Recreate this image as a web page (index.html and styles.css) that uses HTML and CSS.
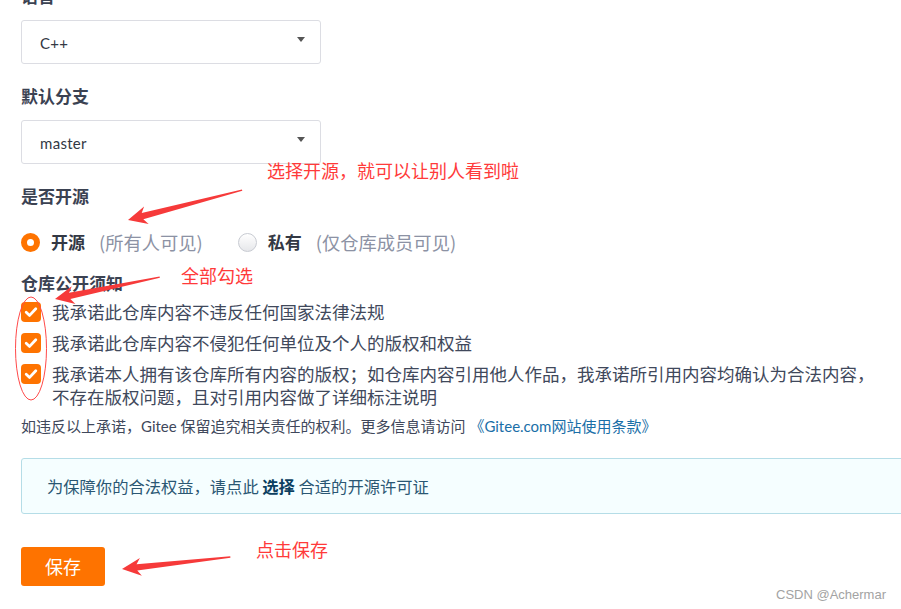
FILE: index.html
```html
<!DOCTYPE html>
<html lang="zh-CN">
<head>
<meta charset="utf-8">
<title>仓库设置</title>
<link rel="stylesheet" href="styles.css">
</head>
<body>
<div class="page">
  <form class="form">
    <div class="field">
      <div class="label">语言</div>
      <div class="select"><span class="select-text">C++</span><i class="caret"></i></div>
    </div>
    <div class="field">
      <div class="label">默认分支</div>
      <div class="select"><span class="select-text">master</span><i class="caret"></i></div>
    </div>
    <div class="field field-radio">
      <div class="label">是否开源</div>
      <div class="radios">
        <label class="radio-item"><i class="radio checked"></i><b class="radio-name">开源</b><span class="radio-hint">(所有人可见)</span></label>
        <label class="radio-item"><i class="radio"></i><b class="radio-name">私有</b><span class="radio-hint">(仅仓库成员可见)</span></label>
      </div>
    </div>
    <div class="field field-check">
      <div class="label">仓库公开须知</div>
      <div class="checks">
        <div class="check-row"><i class="checkbox"><svg viewBox="0 0 20 20" width="20" height="20"><path d="M5.2 10.2 L8.6 13.4 L14.8 6.8" fill="none" stroke="#fff" stroke-width="2.8" stroke-linecap="round" stroke-linejoin="round"/></svg></i><span class="check-text">我承诺此仓库内容不违反任何国家法律法规</span></div>
        <div class="check-row"><i class="checkbox"><svg viewBox="0 0 20 20" width="20" height="20"><path d="M5.2 10.2 L8.6 13.4 L14.8 6.8" fill="none" stroke="#fff" stroke-width="2.8" stroke-linecap="round" stroke-linejoin="round"/></svg></i><span class="check-text">我承诺此仓库内容不侵犯任何单位及个人的版权和权益</span></div>
        <div class="check-row"><i class="checkbox"><svg viewBox="0 0 20 20" width="20" height="20"><path d="M5.2 10.2 L8.6 13.4 L14.8 6.8" fill="none" stroke="#fff" stroke-width="2.8" stroke-linecap="round" stroke-linejoin="round"/></svg></i><span class="check-text">我承诺本人拥有该仓库所有内容的版权；如仓库内容引用他人作品，我承诺所引用内容均确认为合法内容，<br>不存在版权问题，且对引用内容做了详细标注说明</span></div>
      </div>
      <div class="notice">如违反以上承诺，Gitee 保留追究相关责任的权利。更多信息请访问 <a class="link" href="#">《Gitee.com网站使用条款》</a></div>
    </div>
    <div class="info-box">为保障你的合法权益，请点此 <b class="info-strong">选择</b> 合适的开源许可证</div>
    <button type="button" class="save-btn">保存</button>
  </form>

  <span class="annot annot-1">选择开源，就可以让别人看到啦</span>
  <span class="annot annot-2">全部勾选</span>
  <span class="annot annot-3">点击保存</span>

  <svg class="overlay" width="901" height="609" viewBox="0 0 901 609">
    <g fill="#f63a3a">
      <polygon transform="translate(128 220) rotate(-14.7)" points="0,0 19,-9 15,-3.2 118,-0.7 118,0.7 15,3.2 19,9"/>
      <polygon transform="translate(55 299) rotate(-11.8)" points="0,0 19,-9 15,-3.2 107,-0.7 107,0.7 15,3.2 19,9"/>
      <polygon transform="translate(122 569) rotate(-6.3)" points="0,0 19,-9 15,-3.2 109,-0.7 109,0.7 15,3.2 19,9"/>
    </g>
    <ellipse cx="31" cy="348.5" rx="15.5" ry="51.5" fill="none" stroke="#ff4a4a" stroke-width="1"/>
  </svg>

  <span class="watermark">CSDN @Achermar</span>
</div>
</body>
</html>
```

FILE: styles.css
```css
html, body {
  margin: 0;
  padding: 0;
  background: #fff;
}

body {
  width: 901px;
  height: 609px;
  overflow: hidden;
  font-family: "Lato", "Noto Sans CJK SC", sans-serif;
  color: #40485b;
}

.page {
  position: relative;
  width: 901px;
  height: 609px;
}

.form {
  display: flex;
  flex-direction: column;
  padding-left: 21px;
  margin: 0;
  transform: translateY(-16px);
}

.field {
  display: flex;
  flex-direction: column;
  margin-bottom: 20px;
}

.label {
  font-family: "Noto Sans CJK SC", sans-serif;
  font-weight: 700;
  font-size: 17px;
  line-height: 24px;
  height: 24px;
  color: #3b4252;
  margin-bottom: 12px;
}

.select {
  box-sizing: border-box;
  width: 300px;
  height: 44px;
  border: 1px solid #dcdde3;
  border-radius: 3px;
  display: flex;
  align-items: center;
  justify-content: space-between;
  padding: 0 15px 0 18px;
  background: #fff;
}

.select-text {
  font-family: "Lato", "Noto Sans CJK SC", sans-serif;
  font-size: 15px;
  color: #333844;
  padding-top: 1px;
  letter-spacing: 0.3px;
}

.caret {
  width: 0;
  height: 0;
  border-top: 5px solid #555;
  border-left: 4.5px solid transparent;
  border-right: 4.5px solid transparent;
  margin-bottom: 5px;
}

.field-radio .label {
  margin-bottom: 22px;
}

.field-radio {
  margin-bottom: 17px;
}

.radios {
  display: flex;
  align-items: center;
  height: 24px;
  gap: 35px;
}

.radio-item {
  display: flex;
  align-items: center;
  font-family: "Noto Sans CJK SC", sans-serif;
  font-size: 17px;
  line-height: 24px;
}

.radio {
  box-sizing: border-box;
  width: 19px;
  height: 19px;
  border-radius: 50%;
  border: 1px solid #c8cbd2;
  background: linear-gradient(#ffffff, #e6e7ea);
  margin-right: 11px;
}

.radio.checked {
  border: 6px solid #fe7300;
  background: #fff;
}

.radio-name {
  font-weight: 700;
  color: #333844;
  margin-right: 14px;
}

.radio-hint {
  color: #8c92a4;
  font-size: 18.3px;
}

.field-check .label {
  margin-bottom: 5px;
}

.field-check {
  margin-bottom: 22px;
}

.checks {
  display: flex;
  flex-direction: column;
  gap: 8px;
}

.check-row {
  display: flex;
  align-items: flex-start;
}

.checkbox {
  flex: none;
  width: 20px;
  height: 20px;
  border-radius: 4px;
  background: #fe7300;
  margin-top: 1.5px;
  margin-right: 11px;
  display: flex;
}

.check-text {
  font-family: "Noto Sans CJK SC", sans-serif;
  font-size: 17.5px;
  line-height: 23px;
  color: #40485b;
}

.notice {
  margin-top: 7.5px;
  font-family: "Lato", "Noto Sans CJK SC", sans-serif;
  font-size: 15px;
  line-height: 20px;
  color: #40485b;
}

.link {
  color: #1a6fa8;
  text-decoration: none;
}

.info-box {
  box-sizing: border-box;
  width: 1000px;
  height: 56px;
  border: 1px solid #b5dde7;
  border-radius: 3px;
  background: #f5feff;
  display: flex;
  align-items: center;
  padding-left: 25px;
  font-family: "Noto Sans CJK SC", sans-serif;
  font-size: 16.3px;
  color: #2a5773;
  white-space: pre;
}

.info-strong {
  color: #0c3f5f;
  font-weight: 700;
}

.save-btn {
  margin-top: 33px;
  width: 84px;
  height: 39px;
  border: none;
  border-radius: 3px;
  background: #fe7300;
  color: #fff;
  font-family: "Noto Sans CJK SC", sans-serif;
  font-size: 18px;
  padding: 0;
  align-self: flex-start;
}

.annot {
  position: absolute;
  font-family: "Noto Sans CJK SC", sans-serif;
  font-size: 18px;
  line-height: 24px;
  color: #ff3a3a;
  white-space: nowrap;
}

.annot-1 {
  left: 267px;
  top: 158px;
}

.annot-2 {
  left: 181px;
  top: 263px;
}

.annot-3 {
  left: 256px;
  top: 537px;
}

.overlay {
  position: absolute;
  left: 0;
  top: 0;
  pointer-events: none;
}

.watermark {
  position: absolute;
  left: 776px;
  top: 586px;
  font-family: "Liberation Sans", sans-serif;
  font-size: 13px;
  line-height: 18px;
  color: #a3a3a3;
}
```
